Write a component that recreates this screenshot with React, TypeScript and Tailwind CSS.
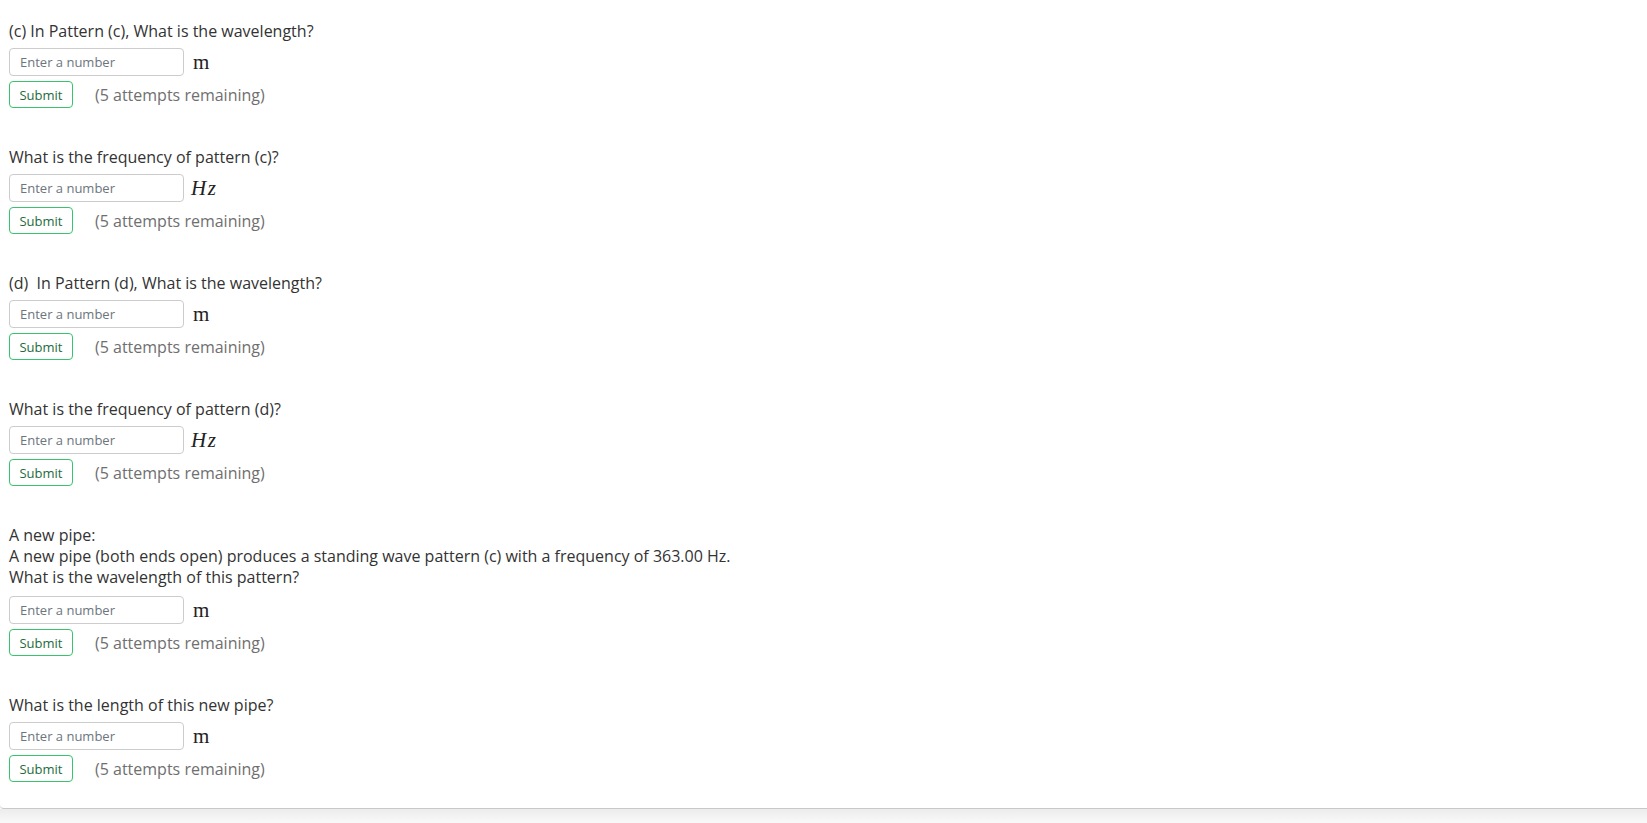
const questions = [
  { lines: ["(c) In Pattern (c), What is the wavelength?"], unit: "m" },
  { lines: ["What is the frequency of pattern (c)?"], unit: "Hz" },
  { lines: ["(d)  In Pattern (d), What is the wavelength?"], unit: "m" },
  { lines: ["What is the frequency of pattern (d)?"], unit: "Hz" },
  {
    lines: [
      "A new pipe:",
      "A new pipe (both ends open) produces a standing wave pattern (c) with a frequency of 363.00 Hz.",
      "What is the wavelength of this pattern?",
    ],
    unit: "m",
  },
  { lines: ["What is the length of this new pipe?"], unit: "m" },
];

const Unit = ({ unit }: { unit: string }) => {
  if (unit === "Hz") {
    return (
      <span className="ml-[7px] text-[21px] italic tracking-[1.5px] text-[#222] font-['Liberation_Serif',serif] leading-none">
        Hz
      </span>
    );
  }
  return (
    <span className="ml-[9px] text-[21px] text-[#222] font-['Liberation_Serif',serif] leading-none">
      m
    </span>
  );
};

const Question = ({ lines, unit }: { lines: string[]; unit: string }) => {
  return (
    <div className="flex flex-col">
      <div className={lines.length > 1 ? "mb-[8px]" : "mb-[6px]"}>
        {lines.map((line, i) => (
          <p key={i} className="text-[16px] leading-[21px] text-[#333] whitespace-pre">
            {line}
          </p>
        ))}
      </div>
      <div className="flex items-center h-[28px]">
        <input
          type="text"
          placeholder="Enter a number"
          className="w-[175px] h-[28px] px-[10px] border border-[#ccc] rounded-[4px] text-[13px] text-[#333] placeholder:text-[#6c757d] bg-white outline-none"
        />
        <Unit unit={unit} />
      </div>
      <div className="flex items-center mt-[5px]">
        <button className="w-[64px] h-[27px] pt-[2px] border border-[#37c46c] rounded-[4px] text-[13px] text-[#1d6b3c] bg-white">
          Submit
        </button>
        <span className="ml-[22px] text-[16px] text-[#6f6f6f]">(5 attempts remaining)</span>
      </div>
    </div>
  );
};

const App = () => {
  return (
    <div className="w-full h-[823px] bg-[#f9f9f9] flex flex-col font-['Open_Sans',sans-serif] overflow-hidden">
      <div className="bg-white border-b border-[#c8c8c8] rounded-bl-[4px] pt-[21px] pb-[26px] pl-[9px] flex flex-col gap-[39px]">
        {questions.map((q, i) => (
          <Question key={i} lines={q.lines} unit={q.unit} />
        ))}
      </div>
      <div className="h-[14px] bg-gradient-to-b from-[#ececec] to-[#f9f9f9]" />
    </div>
  );
};

export default App;
